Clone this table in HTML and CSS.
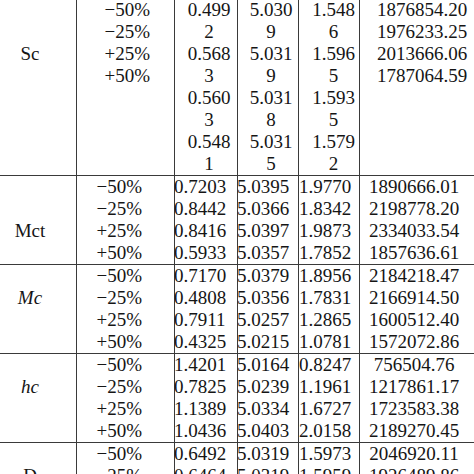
FILE: index.html
```html
<!DOCTYPE html>
<html>
<head>
<meta charset="utf-8">
<link rel="stylesheet" href="styles.css">
</head>
<body>
<div class="table">
  <div class="section sc">
    <div class="cell c1"><br><br>Sc</div>
    <div class="cell c2">−50%<br>−25%<br>+25%<br>+50%</div>
    <div class="cell c3">0.499<br>2<br>0.568<br>3<br>0.560<br>3<br>0.548<br>1</div>
    <div class="cell c4">5.030<br>9<br>5.031<br>9<br>5.031<br>8<br>5.031<br>5</div>
    <div class="cell c5">1.548<br>6<br>1.596<br>5<br>1.593<br>5<br>1.579<br>2</div>
    <div class="cell c6">1876854.20<br>1976233.25<br>2013666.06<br>1787064.59</div>
  </div>
  <div class="section">
    <div class="cell c1"><br><br>Mct</div>
    <div class="cell c2">−50%<br>−25%<br>+25%<br>+50%</div>
    <div class="cell c3">0.7203<br>0.8442<br>0.8416<br>0.5933</div>
    <div class="cell c4">5.0395<br>5.0366<br>5.0397<br>5.0357</div>
    <div class="cell c5">1.9770<br>1.8342<br>1.9873<br>1.7852</div>
    <div class="cell c6">1890666.01<br>2198778.20<br>2334033.54<br>1857636.61</div>
  </div>
  <div class="section">
    <div class="cell c1"><br><i>Mc</i></div>
    <div class="cell c2">−50%<br>−25%<br>+25%<br>+50%</div>
    <div class="cell c3">0.7170<br>0.4808<br>0.7911<br>0.4325</div>
    <div class="cell c4">5.0379<br>5.0356<br>5.0257<br>5.0215</div>
    <div class="cell c5">1.8956<br>1.7831<br>1.2865<br>1.0781</div>
    <div class="cell c6">2184218.47<br>2166914.50<br>1600512.40<br>1572072.86</div>
  </div>
  <div class="section">
    <div class="cell c1"><br><i>hc</i></div>
    <div class="cell c2">−50%<br>−25%<br>+25%<br>+50%</div>
    <div class="cell c3">1.4201<br>0.7825<br>1.1389<br>1.0436</div>
    <div class="cell c4">5.0164<br>5.0239<br>5.0334<br>5.0403</div>
    <div class="cell c5">0.8247<br>1.1961<br>1.6727<br>2.0158</div>
    <div class="cell c6">756504.76<br>1217861.17<br>1723583.38<br>2189270.45</div>
  </div>
  <div class="section">
    <div class="cell c1"><br>D</div>
    <div class="cell c2">−50%<br>−25%<br>+25%<br>+50%</div>
    <div class="cell c3">0.6492<br>0.6464<br>0.6480<br>0.6455</div>
    <div class="cell c4">5.0319<br>5.0319<br>5.0318<br>5.0316</div>
    <div class="cell c5">1.5973<br>1.5959<br>1.5935<br>1.5792</div>
    <div class="cell c6">2046920.11<br>1926489.86<br>2013666.06<br>1787064.59</div>
  </div>
</div>
</body>
</html>
```

FILE: styles.css
```css
html, body {
  margin: 0;
  padding: 0;
  background: #fff;
  overflow: hidden;
}

body {
  width: 474px;
  height: 474px;
}

.table {
  margin-left: -16px;
  margin-top: -1px;
  width: 490px;
  font-family: "Liberation Serif", "Times New Roman", serif;
  font-size: 19px;
  line-height: 22px;
  color: #151515;
}

.section {
  display: grid;
  grid-template-columns: 93px 98px 63px 61px 61px 114px;
  border-bottom: 1px solid #3a3a3a;
}

.cell {
  box-sizing: border-box;
  white-space: nowrap;
}

.c1, .c2, .c3, .c4, .c5 {
  border-right: 1px solid #3a3a3a;
}

.c1 {
  text-align: center;
  padding-left: 0;
}

.c2 {
  text-align: right;
  padding-right: 32px;
}

.c3, .c4, .c5 {
  text-align: left;
}

.c3 {
  margin-left: -1px;
}

.c4 {
  margin-left: -1px;
}

.c6 {
  text-align: center;
  padding-right: 6px;
}

.sc .c2 {
  padding-right: 24px;
}

.sc .c3 {
  text-align: center;
  padding-left: 6px;
  margin-left: 0;
}

.sc .c4 {
  text-align: center;
  padding-left: 6px;
  margin-left: 0;
}

.sc .c5 {
  text-align: center;
  padding-left: 9px;
}

.sc .c6 {
  padding-left: 10px;
  padding-right: 0;
}
```
